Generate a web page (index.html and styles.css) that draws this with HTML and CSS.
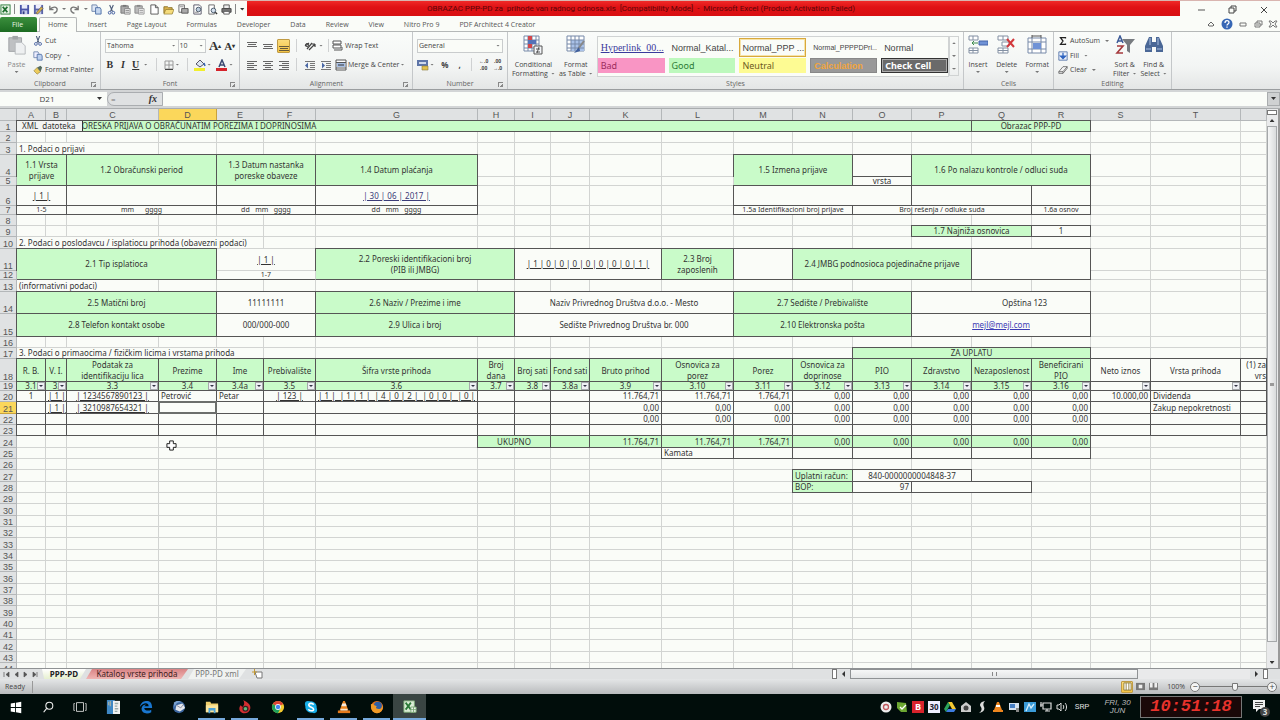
FILE: index.html
```html
<!DOCTYPE html>
<html lang="sr">
<head>
<meta charset="utf-8">
	<title>OBRAZAC PPP-PD - Microsoft Excel</title>
	<link rel="stylesheet" href="styles.css">
	<script src="sheet.js" defer></script>
</head>
<body>
	<header class="titleBar">
		<div class="quick">
			<button aria-label="Excel"><svg viewBox="0 0 12 12"><rect x="1" y="1" width="10" height="10" fill="#e9f3e6" stroke="#2f7d3c"/><path d="M3 3l5 6M8 3l-5 6" stroke="#1f6e2e" stroke-width="2"/></svg></button>
			<i class="bar"></i>
			<button aria-label="Save"><svg viewBox="0 0 12 12"><path d="M1 1h10v10H1z" fill="#4a55a8"/><path d="M3 1h6v4H3z" fill="#e8ecfa"/><path d="M3 7h6v4H3z" fill="#c3c9e8"/><path d="M4 8h2v3H4z" fill="#333c80"/></svg></button>
			<button aria-label="Save as"><svg viewBox="0 0 12 12"><path d="M1 1h10v10H1z" fill="#5964a8"/><path d="M3 1h6v4H3z" fill="#eef"/><path d="M3 7h6v4H3z" fill="#c3c9e8"/><path d="M3 10l6-7 2 2-6 6z" fill="#d8b04a" stroke="#444" stroke-width=".6"/></svg></button>
			<button aria-label="Undo"><svg viewBox="0 0 12 12"><path d="M2 2v4h4M2 6c3-4 8-3 8 0s-3 4-4 4" fill="none" stroke="#777" stroke-width="1.5"/></svg></button>
			<i class="arrow"></i>
			<button aria-label="Redo"><svg viewBox="0 0 12 12"><path d="M10 2v4H6M10 6c-3-4-8-3-8 0s3 4 4 4" fill="none" stroke="#777" stroke-width="1.5"/></svg></button>
			<i class="arrow"></i>
			<button aria-label="Copy"><svg viewBox="0 0 12 12"><path d="M1 1h5l1 2v5H1z" fill="#dfe8f6" stroke="#6b83ab"/><path d="M5 4h5l1 2v5H5z" fill="#c5d7f0" stroke="#4d6ea5"/></svg></button>
			<button aria-label="Cut"><svg viewBox="0 0 12 12"><path d="M4 1l3 7M8 1L5 8" stroke="#4a5a78" stroke-width="1.2"/><circle cx="4" cy="9.500" r="1.500" fill="none" stroke="#3a569b"/><circle cx="8" cy="9.500" r="1.500" fill="none" stroke="#3a569b"/></svg></button>
			<button aria-label="Paste"><svg viewBox="0 0 12 12"><path d="M1 2h8v8H1z" fill="#aaa" stroke="#777"/><path d="M3 1h4v2H3z" fill="#777"/><path d="M5 5h6v6H5z" fill="#eee" stroke="#888"/><path d="M6 7h4M6 9h4" stroke="#888"/></svg></button>
			<button aria-label="Paste values"><svg viewBox="0 0 12 12"><path d="M1 2h8v8H1z" fill="#bbb" stroke="#888"/><path d="M3 1h4v2H3z" fill="#888"/><path d="M5 5h6v6H5z" fill="#f2f2f2" stroke="#999"/><path d="M6 7h4M6 9h4" stroke="#999"/></svg></button>
			<button aria-label="New"><svg viewBox="0 0 12 12"><path d="M2 1h5l3 3v7H2z" fill="#fff" stroke="#555"/><path d="M7 1v3h3" fill="none" stroke="#555"/></svg></button>
			<button aria-label="Open"><svg viewBox="0 0 12 12"><path d="M1 3h4l1 1h4v6H1z" fill="#d9b24c" stroke="#8b7328"/><path d="M3 6h9l-2 5H1z" fill="#f5dc7c" stroke="#8b7328" stroke-width=".7"/></svg></button>
			<button aria-label="Print preview"><svg viewBox="0 0 12 12"><path d="M1 1h6v8H1z" fill="#fff" stroke="#666"/><path d="M4 5h7v5H4z" fill="#aaa" stroke="#555"/><path d="M2 3h4" stroke="#888"/></svg></button>
			<button aria-label="Page setup"><svg viewBox="0 0 12 12"><path d="M2 1h6l2 2v8H2z" fill="#fff" stroke="#556"/><circle cx="7" cy="6" r="2.500" fill="#bcd" stroke="#456"/><path d="M3 9h4" stroke="#888"/></svg></button>
			<button aria-label="Find"><svg viewBox="0 0 12 12"><path d="M2 1h6v10H2z" fill="#fff" stroke="#666"/><circle cx="7" cy="7" r="2.500" fill="#d5e0ee" stroke="#456"/><path d="M9 9l2 2" stroke="#333" stroke-width="1.500"/></svg></button>
			<button aria-label="Print"><svg viewBox="0 0 12 12"><path d="M3 1h6v4H3z" fill="#eee" stroke="#555"/><path d="M1 5h10v4H1z" fill="#777" stroke="#444"/><path d="M3 8h6v3H3z" fill="#fff" stroke="#555"/></svg></button>
			<i class="bar"></i>
			<i class="arrow dark"></i>
		</div>
		<div class="title">OBRAZAC PPP-PD za&nbsp; prihode van radnog odnosa.xls&nbsp; [Compatibility Mode]&nbsp; -&nbsp; Microsoft Excel (Product Activation Failed)</div>
		<div class="winBtns">
			<button aria-label="Minimize"><svg viewBox="0 0 10 10"><path d="M1 5h7" stroke="#555"/></svg></button>
			<button aria-label="Restore"><svg viewBox="0 0 10 10"><path d="M1 3h5v5H1zM3 3V1h5v5H6" fill="none" stroke="#444"/></svg></button>
			<button aria-label="Close"><svg viewBox="0 0 10 10"><path d="M2 2l6 6M8 2L2 8" stroke="#444"/></svg></button>
		</div>
	</header>
	<nav class="tabs">
		<button class="file">File</button>
		<button class="on">Home</button>
		<button>Insert</button>
		<button>Page Layout</button>
		<button>Formulas</button>
		<button>Developer</button>
		<button>Data</button>
		<button>Review</button>
		<button>View</button>
		<button>Nitro Pro 9</button>
		<button>PDF Architect 4 Creator</button>
		<div class="tabIcons">
			<svg viewBox="0 0 10 10"><path d="M2 6l3-3 3 3-1 1H3z" fill="none" stroke="#666"/></svg>
			<svg class="help" viewBox="0 0 12 12"><circle cx="6" cy="6" r="5.500" fill="#3767b5"/><path d="M4 5c0-3 4-3 4-.5C8 6 6 6 6 7.500M6 8.500v1.300" fill="none" stroke="#fff" stroke-width="1.300"/></svg>
			<svg viewBox="0 0 10 10"><path d="M2 4h6v3H2z" fill="none" stroke="#777"/></svg>
			<svg viewBox="0 0 10 10"><path d="M2 4h5v4H2zM4 4V2h5v4H7M3 6h3" fill="none" stroke="#777"/></svg>
			<svg viewBox="0 0 10 10"><path d="M1 2h2l2 2 2-2h2L7 5l2 3H7L5 6 3 8H1l2-3z" fill="none" stroke="#777"/></svg>
		</div>
	</nav>
	<section class="ribbon">
		<div class="group clip">
			<div class="tools">
				<button class="big faded"><svg viewBox="0 0 20 22"><path d="M1 3h14v15H1z" fill="#bfc1c3" stroke="#9da0a3"/><path d="M5 1h6v4H5z" fill="#a2a5a8"/><path d="M8 8h7l4 4v9H8z" fill="#eef0f1" stroke="#b3b6b9"/></svg>Paste<i class="arrow"></i></button>
				<div class="col">
					<button><svg viewBox="0 0 12 12"><path d="M4 0l3 8M8 0L5 8" stroke="#4a5a78" stroke-width="1.300"/><circle cx="3.500" cy="9.500" r="1.700" fill="none" stroke="#3a569b"/><circle cx="8.500" cy="9.500" r="1.700" fill="none" stroke="#3a569b"/></svg>Cut</button>
					<button><svg viewBox="0 0 12 12"><path d="M1 1h5l1 2v5H1z" fill="#eef" stroke="#6b83ab"/><path d="M5 4h5l1 2v5H5z" fill="#bcd0ee" stroke="#4d6ea5"/></svg>Copy<i class="arrow"></i></button>
					<button><svg viewBox="0 0 12 12"><path d="M1 7l4-4 4 5-4 3z" fill="#eccb5c" stroke="#8c7a3b" stroke-width=".7"/><path d="M5 3l4-2 2 2-2 5z" fill="#566c60"/></svg>Format Painter</button>
				</div>
			</div>
			<p>Clipboard<i class="launch"></i></p>
		</div>
		<div class="group font">
			<div class="tools rows">
				<div class="row">
					<label class="combo name"><input value="Tahoma" aria-label="Font"><i class="arrow"></i></label><label class="combo size"><input value="10" aria-label="Font size"><i class="arrow"></i></label>
					<button class="serif grow">A<sup>▴</sup></button>
					<button class="serif">A<sup>▾</sup></button>
				</div>
				<div class="row">
					<button class="serif fmt">B</button>
					<button class="serif fmt"><em>I</em></button>
					<button class="serif fmt"><u>U</u></button><i class="arrow"></i>
					<i class="line"></i>
					<button aria-label="Borders"><svg viewBox="0 0 12 12"><path d="M2 2h8v8H2zM6 2v8M2 6h8" fill="none" stroke="#999"/><path d="M2 10.500h8" stroke="#444"/></svg></button><i class="arrow"></i>
					<i class="line"></i>
					<button aria-label="Fill colour"><svg viewBox="0 0 12 12"><path d="M2 5l4-4 4 4-4 3z" fill="#dde6f2" stroke="#556"/><path d="M10 4l1 3" stroke="#3767b5" stroke-width="1.500"/><path d="M0 9h11v3H0z" fill="#f1ef2d"/></svg></button><i class="arrow"></i>
					<button aria-label="Font colour"><svg viewBox="0 0 12 12"><path d="M3 8l3-7 3 7M4 6h4" fill="none" stroke="#3b4a72" stroke-width="1.500"/><path d="M0 9h11v3H0z" fill="#d5222a"/></svg></button><i class="arrow"></i>
				</div>
			</div>
			<p>Font<i class="launch"></i></p>
		</div>
		<div class="group align">
			<div class="tools rows">
				<div class="row">
					<button aria-label="Top"><svg viewBox="0 0 12 12"><path d="M1 2.500h10M2 4.500h8M1 6.500h10" stroke="#666"/></svg></button>
					<button aria-label="Middle"><svg viewBox="0 0 12 12"><path d="M1 4.500h10M2 6.500h8M1 8.500h10" stroke="#666"/></svg></button>
					<button class="pressed" aria-label="Bottom"><svg viewBox="0 0 12 12"><path d="M1 6.500h10M2 8.500h8M1 10.500h10" stroke="#665a3c"/></svg></button>
					<i class="line"></i>
					<button aria-label="Orientation"><svg viewBox="0 0 12 12"><path d="M1 6l4-3M3 9l5-6M5 10l6-6M11 4H8M11 4v3" stroke="#444" stroke-width="1.200"/><circle cx="3" cy="5" r="1.500" fill="none" stroke="#444"/></svg></button><i class="arrow"></i>
					<i class="line off"></i>
					<button class="wide"><svg viewBox="0 0 12 12"><path d="M1 1h8v3H1zM1 5h8v3H1z" fill="#fff" stroke="#555"/><path d="M2 10h8V7" fill="none" stroke="#555"/></svg>Wrap Text</button>
				</div>
				<div class="row">
					<button aria-label="Left"><svg viewBox="0 0 12 12"><path d="M1 2.500h10M1 4.500h7M1 6.500h10M1 8.500h7M1 10.500h10" stroke="#666"/></svg></button>
					<button aria-label="Center"><svg viewBox="0 0 12 12"><path d="M1 2.500h10M3 4.500h6M1 6.500h10M3 8.500h6M1 10.500h10" stroke="#666"/></svg></button>
					<button aria-label="Right"><svg viewBox="0 0 12 12"><path d="M1 2.500h10M4 4.500h7M1 6.500h10M4 8.500h7M1 10.500h10" stroke="#666"/></svg></button>
					<i class="line"></i>
					<button aria-label="Outdent"><svg viewBox="0 0 12 12"><path d="M1 2.500h10M6 4.500h5M6 6.500h5M6 8.500h5M1 10.500h10" stroke="#777"/><path d="M1 6.500l3-3v6z" fill="#4a68a5"/></svg></button>
					<button aria-label="Indent"><svg viewBox="0 0 12 12"><path d="M1 2.500h10M6 4.500h5M6 6.500h5M6 8.500h5M1 10.500h10" stroke="#777"/><path d="M5 6.500l-3-3v6z" fill="#4a68a5"/></svg></button>
					<button class="wide"><svg viewBox="0 0 12 12"><path d="M1 1h10v10H1zM1 3.500h10M1 9h10" fill="#fff" stroke="#555"/><path d="M2 4h8v4H2z" fill="#a8c0e6"/><path d="M3 6h6" stroke="#333"/></svg>Merge &amp; Center<i class="arrow"></i></button>
				</div>
			</div>
			<p>Alignment<i class="launch"></i></p>
		</div>
		<div class="group number">
			<div class="tools rows">
				<div class="row"><label class="combo general"><input value="General" aria-label="Number format"><i class="arrow"></i></label></div>
				<div class="row">
					<button aria-label="Currency"><svg viewBox="0 0 12 12"><path d="M0 1h11v6H0z" fill="#5e75a8"/><path d="M2 3h7v2H2z" fill="#cdd8ec"/><path d="M5 7h6v4H5z" fill="#e2c04c" stroke="#8c7a3b" stroke-width=".6"/></svg></button><i class="arrow"></i>
					<button class="sign">%</button>
					<button class="sign">,</button>
					<i class="line"></i>
					<button class="dec"><span>←.0</span><span>.00</span></button>
					<button class="dec"><span>.00</span><span>→.0</span></button>
				</div>
			</div>
			<p>Number<i class="launch"></i></p>
		</div>
		<div class="group styles">
			<div class="tools">
				<button class="big"><svg viewBox="0 0 20 20"><path d="M1 1h15v15H1zM1 5h15M1 9h15M1 13h15M5 1v15M9 1v15M13 1v15" fill="#fff" stroke="#7689a8"/><path d="M5 1h4v4H5zM5 9h4v4H5z" fill="#d3464a"/><path d="M5 5h8v4H5z" fill="#5572b8"/><path d="M11 11h8v8h-8z" fill="#f3f5f8" stroke="#555"/><path d="M13 14h4M13 17h4M16 12l-2 6" stroke="#555"/></svg>Conditional<span>Formatting<i class="arrow"></i></span></button>
				<button class="big"><svg viewBox="0 0 20 20"><path d="M1 1h17v15H1z" fill="#fff" stroke="#7689a8"/><path d="M5 5h13v11H5z" fill="#a9c1e8"/><path d="M1 5h17M1 9h17M1 13h17M5 1v15M9 1v15M13 1v15" fill="none" stroke="#7689a8"/><path d="M18 6l-6 8" stroke="#888" stroke-width="2"/><path d="M13 12l-5 6 6-2z" fill="#3f5f9c"/></svg>Format<span>as Table<i class="arrow"></i></span></button>
				<div class="gallery">
					<button class="hyper">Hyperlink_00...</button>
					<button class="norm">Normal_Katal...</button>
					<button class="norm chosen">Normal_PPP ...</button>
					<button class="norm tiny">Normal_PPPPDPri...</button>
					<button class="norm">Normal</button>
					<button class="seg bad">Bad</button>
					<button class="seg good">Good</button>
					<button class="seg neutral">Neutral</button>
					<button class="seg calc">Calculation</button>
					<button class="seg check">Check Cell</button>
				</div>
				<div class="spin"><i class="arrow up"></i><i class="arrow"></i><i class="arrow more"></i></div>
			</div>
			<p>Styles</p>
		</div>
		<div class="group cells">
			<div class="tools">
				<button class="big"><svg viewBox="0 0 20 20"><path d="M1 1h9v4H1zM1 13h9v5H1zM5 1v4M5 13v5M1 15.500h9" fill="#fff" stroke="#8390a3"/><path d="M11 6h9v4h-9z" fill="#6f92d6" stroke="#4565a8"/><path d="M10 8H4M6 6L4 8l2 2" fill="none" stroke="#3c8a4b"/></svg>Insert<i class="arrow"></i></button>
				<button class="big"><svg viewBox="0 0 20 20"><path d="M1 1h10v4H1zM5 7h7v4H5zM1 13h10v5H1zM6 1v4M6 13v5M1 15.500h10" fill="#fff" stroke="#8390a3"/><path d="M10 4l7 8M17 4l-7 8" stroke="#d2383c" stroke-width="2"/></svg>Delete<i class="arrow"></i></button>
				<button class="big"><svg viewBox="0 0 20 20"><path d="M1 3h18v15H1zM1 7h18M1 14h18M5 3v15M14 3v15" fill="#fff" stroke="#7689a8"/><path d="M6 8h8v6H6z" fill="#6f92d6"/><path d="M5 1h9M5 0v3M14 0v3" stroke="#555"/></svg>Format<i class="arrow"></i></button>
			</div>
			<p>Cells</p>
		</div>
		<div class="group editing">
			<div class="tools">
				<div class="col">
					<button><svg viewBox="0 0 12 12"><path d="M9 3V2H3l3 4-3 4h6V9" fill="none" stroke="#222" stroke-width="1.500"/></svg>AutoSum<i class="arrow"></i></button>
					<button><svg viewBox="0 0 12 12"><path d="M1 1h10v10H1z" fill="#eaf0fa" stroke="#4d6ea5"/><path d="M6 2v6M3 6l3 3 3-3z" fill="#2d63c0" stroke="#2d63c0" stroke-width="1.500"/></svg>Fill<i class="arrow"></i></button>
					<button><svg viewBox="0 0 12 12"><path d="M1 8l5-6h5l-5 6zM1 8v2h5l5-6V2M6 8v2" fill="#f5f5f8" stroke="#555" stroke-width=".9"/></svg>Clear<i class="arrow"></i></button>
				</div>
				<button class="big"><svg viewBox="0 0 20 20"><path d="M2 8l3-7 3 7M3 6h4" fill="none" stroke="#3c5a97" stroke-width="1.500"/><path d="M2 11h6l-6 7h6" fill="none" stroke="#a53a3e" stroke-width="1.600"/><path d="M7 4h13l-5 6v8l-3-2v-6z" fill="#777b80"/></svg>Sort &amp;<span>Filter<i class="arrow"></i></span></button>
				<button class="big"><svg viewBox="0 0 20 20"><path d="M5 2h3v5h4V2h3l4 9v6h-7v-5H8v5H1v-6z" fill="#4a6796"/><path d="M6 3v7M14 3v7M2 14h5M13 14h5" stroke="#a9bfe0"/></svg>Find &amp;<span>Select<i class="arrow"></i></span></button>
			</div>
			<p>Editing</p>
		</div>
	</section>
	<section class="formulaBar">
		<label class="nameBox"><input value="D21" aria-label="Name box"><i class="arrow dark"></i></label>
		<div class="fx"><span>=</span><em>fx</em></div>
		<input class="formula" aria-label="Formula">
		<button class="expand" aria-label="Expand"><i class="arrow dark"></i></button>
	</section>
	<main class="sheetArea">
		<div class="sheetView"><table class="sheet" id="sheet"></table>
			<svg class="cursor" viewBox="0 0 12 12"><path d="M4 1h4v3h3v4H8v3H4V8H1V4h3z" fill="#fff" stroke="#111"/></svg>
		</div>
		<div class="vScroll"><i class="split"></i><i class="arrow up dark"></i><div class="thumb"><i></i></div><i class="arrow dark"></i></div>
	</main>
	<div class="sheetTabs">
		<svg class="navs" viewBox="0 0 42 11"><path d="M4 3v5M9 3L6 5.500 9 8zM18 3l-3 2.500L18 8zM24 3l3 2.500L24 8zM33 3l3 2.500L33 8zM37 3v5" fill="#555" stroke="#555" stroke-width=".7"/></svg>
		<button class="sel">PPP-PD</button>
		<button class="red">Katalog vrste prihoda</button>
		<button class="plain">PPP-PD xml</button>
		<button class="new" aria-label="New sheet"><svg viewBox="0 0 12 10"><path d="M4 3h7v6H6z" fill="#fff" stroke="#777"/><path d="M1 3h5M3.500 0v6" stroke="#c49a35"/></svg></button>
		<div class="hScroll"><i class="split"></i><i class="arrow left dark"></i><div class="track"><div class="thumb"><i></i></div></div><i class="arrow right dark"></i><i class="split"></i></div>
	</div>
	<footer class="status">
		<span class="ready">Ready</span>
		<div class="views">
			<button class="pressed" aria-label="Normal view"><svg viewBox="0 0 10 10"><path d="M1 1h8v8H1zM3.500 1v8M6.500 1v8" fill="#fff" stroke="#8c7a3b"/></svg></button>
			<button aria-label="Page layout"><svg viewBox="0 0 10 10"><path d="M0 1h10v8H0z" fill="#777"/><path d="M3 3h4v4H3z" fill="#eee"/></svg></button>
			<button aria-label="Page break"><svg viewBox="0 0 10 10"><path d="M0 1h10v8H0z" fill="#777"/><path d="M1 1h3v5H1zM6 1h3v5H6z" fill="#eee"/></svg></button>
		</div>
		<span class="pct">100%</span>
		<button class="round">−</button>
		<input class="zoom" type="range" min="0" max="100" value="53" aria-label="Zoom">
		<button class="round">+</button>
	</footer>
	<nav class="taskbar">
		<button aria-label="Start"><svg viewBox="0 0 16 16"><path d="M2 4l5-1v5H2zM8 3l6-1v6H8zM2 9h5v5l-5-1zM8 9h6v6l-6-1z" fill="#fff"/></svg></button>
		<button aria-label="Search"><svg viewBox="0 0 16 16"><circle cx="9.500" cy="6.500" r="4" fill="none" stroke="#eee" stroke-width="1.200"/><path d="M6.500 9.500L3 14" stroke="#eee" stroke-width="1.300"/></svg></button>
		<button aria-label="Task view"><svg viewBox="0 0 16 16"><path d="M4 3h8v10H4zM2 4H1v8h1M14 4h1v8h-1" fill="none" stroke="#ddd"/></svg></button>
		<button class="app" aria-label="Files"><svg viewBox="0 0 16 16"><path d="M1 0h9v16H1z" fill="#3e87c4"/><path d="M8 1h8v15H8z" fill="#f1f1f1"/><path d="M3 2v4M5 1v6M10 4h4M10 7h3M10 10h4M10 13h3" stroke="#9aa" stroke-width="1.500"/></svg></button>
		<button class="app" aria-label="Edge"><svg viewBox="0 0 16 16"><path d="M1 8C2 2 6 1 9 1c4 0 6 3 6 8H6c0 3 5 4 8 2v3c-5 3-12 1-11-5 1-3 3-4 5-4-1 1-2 2-2 2h5c0-5-7-4-10 1z" fill="#1976cf"/></svg></button>
		<button class="app" aria-label="Thunderbird"><svg viewBox="0 0 16 16"><circle cx="8" cy="8" r="7" fill="#3b659e"/><path d="M5 6l7-2 3 5-6 4-5-2z" fill="#e6e9ee"/><path d="M5 6l5 3 3-4" fill="none" stroke="#889"/><path d="M2 3c3-3 8-2 9 0-4-1-6 0-8 5z" fill="#7ba2d0"/></svg></button>
		<button class="app open" aria-label="Explorer"><svg viewBox="0 0 16 16"><path d="M1 2h5l1 2h8v10H1z" fill="#efce6c"/><path d="M1 6h14v8H1z" fill="#fae59d"/><path d="M4 9h8v6h-2v-3H6v3H4z" fill="#4da3d8"/></svg></button>
		<button class="app open" aria-label="Dragon"><svg viewBox="0 0 16 16"><path d="M6 0c5 3 9 5 8 10-1 4-5 6-8 5-4-1-6-5-3-9l2 2c2-2 3-4 1-8z" fill="#d42e31"/><circle cx="8.500" cy="10" r="3.500" fill="#3a2020"/><circle cx="8.500" cy="10" r="2" fill="#5bb87b"/></svg></button>
		<button class="app" aria-label="Chrome"><svg viewBox="0 0 16 16"><circle cx="8" cy="8" r="7" fill="#f2c92e"/><path d="M8 8L2 4.500A7 7 0 0 1 14 4.500z" fill="#dc4437"/><path d="M2 4.500A7 7 0 0 0 8 15l3-5.500-3-1.500z" fill="#1fa05a"/><circle cx="8" cy="8" r="3.300" fill="#fff"/><circle cx="8" cy="8" r="2.500" fill="#4385ee"/></svg></button>
		<button class="app open" aria-label="Skype"><svg viewBox="0 0 16 16"><circle cx="8" cy="8" r="6.500" fill="#18aee8"/><circle cx="4.500" cy="4.500" r="3.500" fill="#18aee8"/><circle cx="11.500" cy="11.500" r="3.500" fill="#18aee8"/><path d="M11 5.500C10 3 5 3.500 5.500 6S11 8 11 10.500 6 13 5 10.500" fill="none" stroke="#fff" stroke-width="1.800"/></svg></button>
		<button class="app open" aria-label="VLC"><svg viewBox="0 0 16 16"><path d="M7 1h2l4 11H3z" fill="#ee861e"/><path d="M6 4h4l1 3H5z" fill="#f4ece2"/><path d="M1 12h14v3H1z" fill="#e4791b"/><path d="M4 10h8v2H4z" fill="#f7e2ca"/></svg></button>
		<button class="app open" aria-label="Firefox"><svg viewBox="0 0 16 16"><circle cx="8" cy="8" r="7" fill="#e5711b"/><circle cx="9" cy="6.500" r="4.500" fill="#2e5fa6"/><path d="M1 5c2-1 3 0 4 1l3 1c-2 1-1 3 1 3 3 1 5-1 5-4 2 4-1 9-6 9S1 11 1 5z" fill="#f09a27"/></svg></button>
		<button class="app open active" aria-label="Excel"><svg viewBox="0 0 16 16"><path d="M1 1h12v13H1z" fill="#dbeed6" stroke="#78a875"/><path d="M3 3l6 8M9 3l-6 8" stroke="#2b7a38" stroke-width="2"/><path d="M9 8h6v6H9z" fill="#eef5ec" stroke="#78a875"/><path d="M9 11h6M12 8v6" stroke="#78a875"/></svg></button>
		<div class="tray">
			<svg viewBox="0 0 12 12"><circle cx="6" cy="6" r="5.500" fill="#eee"/><circle cx="6" cy="6" r="2.500" fill="none" stroke="#c2595e" stroke-width="1.300"/></svg>
			<svg viewBox="0 0 12 12"><path d="M1 1l9 1 1 9-6 0-4-4z" fill="#6da832"/><path d="M4 6l2 2 4-4" fill="none" stroke="#fff" stroke-width="1.300"/></svg>
			<b class="sq b">B</b>
			<b class="sq d">30</b>
			<svg viewBox="0 0 12 12"><path d="M4 1h4l4 7H8z" fill="#f3c832"/><path d="M4 1L0 8l2 3 4-7z" fill="#2ba35a"/><path d="M2 11l2-3h8l-2 3z" fill="#3d7ce0"/></svg>
			<svg viewBox="0 0 12 12"><path d="M1 5l5-4 5 4v6H1z" fill="#ccc"/><circle cx="6" cy="7" r="2.500" fill="#444"/></svg>
			<svg viewBox="0 0 12 12"><path d="M9 0c-5 1-6 4-4 6 1 2 1 4-2 6 5-1 6-4 5-6S7 2 9 0z" fill="#ddd"/></svg>
			<svg viewBox="0 0 12 12"><path d="M5 1h2l3 8H2z" fill="#ee861e"/><path d="M4 4h4v2H4z" fill="#fff"/><path d="M1 9h10v2H1z" fill="#ee861e"/></svg>
			<svg viewBox="0 0 12 12"><path d="M1 2h10v7H1z" fill="#d5e1ee"/><path d="M2 3h5v4H2z" fill="#477fc4"/><path d="M8 7h3v4H8z" fill="#888"/></svg>
			<svg viewBox="0 0 12 12"><path d="M0 1h12v10H0z" fill="#3b9bd8"/><path d="M2 10l3-7 2 4 3-4" stroke="#d9eefa" stroke-width="1.300" fill="none"/></svg>
			<svg viewBox="0 0 12 12"><path d="M3 2h8v6H3zM1 1v5M0 4h3M5 10h5M7 8v2" fill="none" stroke="#ddd" stroke-width="1.200"/></svg>
			<svg viewBox="0 0 12 12"><path d="M1 4h2l2-2v8L3 8H1zM7 4c1 1 1 3 0 4M9 2c2 2 2 6 0 8" fill="none" stroke="#ddd"/></svg>
		</div>
		<span class="lang">SRP</span>
		<span class="date">FRI, 30<br>JUN</span>
		<span class="clock">10:51:18</span>
		<button class="note" aria-label="Notifications"><svg viewBox="0 0 18 18"><path d="M1 2h12v9H7l-3 3v-3H1z" fill="#f0f0f0"/><path d="M3 4.500h8M3 6.500h8M3 8.500h5" stroke="#444"/></svg><b>3</b></button>
	</nav>
</body>
</html>
```

FILE: styles.css
```css
*{
	box-sizing: border-box;
}
body{
	margin: 0px;
	height: 100vh;
	display: flex;
	flex-direction: column;
	overflow: hidden;
	background-color: #fafcf8;
	font-family: "Open Sans", "Noto Sans", sans-serif;
	font-size: 7px;
	line-height: 8px;
	color: #444;
}
button, input{
	font: inherit;
	color: inherit;
	background: none;
	border: 0;
	padding: 0;
	margin: 0;
	min-width: 0;
}
button{
	display: flex;
	align-items: center;
	white-space: nowrap;
}
p{
	margin: 0;
}
svg{
	display: block;
	width: 12px;
	height: 12px;
	flex: none;
}
/* small drop-down arrows */
.arrow{
	display: inline-block;
	flex: none;
	width: 4px;
	height: 2px;
	margin-left: 3px;
	background-color: #777;
	clip-path: polygon(0 0, 100% 0, 50% 100%);
}
.arrow.dark{
	width: 5px;
	height: 3px;
	background-color: #333;
}
.arrow.up{
	clip-path: polygon(0 100%, 100% 100%, 50% 0);
}
.arrow.left{
	width: 3px;
	height: 6px;
	clip-path: polygon(100% 0, 100% 100%, 0 50%);
}
.arrow.right{
	width: 3px;
	height: 6px;
	clip-path: polygon(0 0, 0 100%, 100% 50%);
}

/* title bar */
.titleBar{
	display: flex;
	height: 17px;
	flex: none;
	border-top: 1px solid #d9b5b0;
}
.quick{
	width: 247px;
	flex: none;
	display: flex;
	align-items: center;
	justify-content: space-between;
	padding-right: 2px;
}
.quick svg{
	width: 11px;
	height: 11px;
}
.quick .arrow{
	margin: 0;
}
.bar{
	width: 1px;
	height: 10px;
	background-color: #888;
}
.title{
	flex: 1;
	height: 15px;
	padding-left: 180px;
	line-height: 15px;
	font-family: Roboto, "Noto Sans", sans-serif;
	font-size: 8px;
	color: #5b0508;
	background: linear-gradient(#f02a28, #e01215 40%, #d80f12);
	white-space: nowrap;
	overflow: hidden;
}
.winBtns{
	width: 100px;
	display: flex;
	align-items: center;
	justify-content: space-between;
	padding: 2px 11px 0 17px;
}
.winBtns svg{
	width: 10px;
	height: 10px;
}

/* ribbon tabs */
.tabs{
	display: flex;
	height: 15px;
	flex: none;
	gap: 2px;
	border-bottom: 1px solid #b5b8b8;
}
.tabs button{
	height: 15px;
	padding: 0 9px;
	color: #555;
}
.tabs .file{
	width: 37px;
	padding: 0 12px;
	color: #e8f5e4;
	background: linear-gradient(#3b8f3d, #1c6b22);
	border-radius: 2px 2px 0 0;
}
.tabs .on{
	background-color: #fafcf8;
	border: 1px solid #b5b8b8;
	border-bottom: 0;
	border-radius: 2px 2px 0 0;
	padding: 0 8px;
}
.tabIcons{
	margin-left: auto;
	display: flex;
	align-items: center;
	gap: 5px;
	padding-right: 2px;
}
.tabIcons svg{
	width: 10px;
	height: 10px;
}
.tabIcons .help{
	width: 12px;
	height: 12px;
}

/* ribbon */
.ribbon{
	display: flex;
	height: 58px;
	flex: none;
	background: linear-gradient(#fafcfa, #f3f5f4 60%, #e4e6e6);
	border-bottom: 1px solid #9a9d9f;
}
.group{
	flex: none;
	display: flex;
	flex-direction: column;
	border-right: 1px solid #c4c7c9;
	padding: 3px 4px 0;
}
.group p{
	position: relative;
	text-align: center;
	color: #666;
	line-height: 10px;
}
.launch{
	position: absolute;
	right: 0;
	top: 3px;
	width: 5px;
	height: 5px;
	border-left: 1px solid #888;
	border-top: 1px solid #888;
	background: linear-gradient(135deg, transparent 55%, #888 55%);
}
.tools{
	flex: 1;
	display: flex;
	gap: 4px;
}
.rows{
	flex-direction: column;
	gap: 4px;
	padding-top: 3px;
}
.row{
	display: flex;
	align-items: center;
	height: 15px;
	gap: 3px;
}
.row .arrow{
	margin: 0 2px 0 0;
}
.col{
	display: flex;
	flex-direction: column;
	justify-content: space-between;
	padding: 0 0 3px;
}
.col button{
	gap: 2px;
	height: 12px;
}
.col svg{
	width: 10px;
	height: 10px;
}
.big{
	flex-direction: column;
	line-height: 9px;
}
.big svg{
	width: 20px;
	height: 20px;
	margin-bottom: 5px;
}
.big > .arrow{
	margin: 2px 0 0;
}
.big span{
	display: flex;
	align-items: center;
}
.faded{
	color: #888;
	width: 25px;
}
.clip{
	width: 101px;
}
.font{
	width: 139px;
}
.align{
	width: 173px;
	padding-left: 5px;
}
.number{
	width: 95px;
}
.styles{
	width: 456px;
}
.cells{
	width: 90px;
}
.editing{
	width: 118px;
}
.cells .tools{
	justify-content: space-between;
}
.combo{
	display: flex;
	align-items: center;
	height: 14px;
	border: 1px solid #c9cccd;
	background-color: #fafcf8;
}
.combo input{
	flex: 1;
	width: 20px;
	padding-left: 1px;
}
.name{
	width: 75px;
}
.size{
	width: 29px;
	margin-left: -4px;
}
.general{
	width: 89px;
}
.serif{
	font-family: "Liberation Serif", serif;
	font-weight: bold;
	font-size: 11px;
	color: #333;
}
.grow{
	font-size: 13px;
}
.serif sup{
	font-size: 6px;
}
.fmt{
	width: 12px;
	justify-content: center;
	font-size: 10px;
}
.line{
	width: 1px;
	height: 13px;
	margin: 0 3px;
	background-color: #cfd1d2;
}
.line.off{
	margin: 0;
}
.align button:not(.wide){
	width: 13px;
	height: 14px;
	justify-content: center;
}
.pressed{
	background: linear-gradient(#fbdc7c, #f4c445);
	border: 1px solid #c09b44;
	border-radius: 1px;
}
.wide{
	gap: 1px;
}
.sign{
	width: 14px;
	font-size: 8px;
	font-weight: bold;
	justify-content: center;
}
.dec{
	flex-direction: column;
	width: 13px;
	font-size: 5px;
	line-height: 7px;
	font-weight: bold;
}
.gallery{
	flex: 1;
	display: grid;
	grid-template-columns: repeat(5, 1fr);
	grid-template-rows: 19px 15px;
	gap: 1px 4px;
	height: 41px;
	margin: 1px 0 0 0;
	padding: 1px 0;
	border: 1px solid #d0d3d3;
	background-color: #fafcf8;
}
.gallery button{
	padding: 0 3px;
	overflow: hidden;
}
.hyper{
	font-family: "Liberation Serif", serif;
	font-size: 10px;
	color: #3a3a9c;
	text-decoration: underline;
}
.norm{
	font-family: "Liberation Sans", sans-serif;
	font-size: 9px;
}
.gallery .chosen{
	padding: 0 2px;
	border: 1px solid #d8a93c;
	box-shadow: inset 0 0 0 1px #f6e3a8;
}
.gallery .tiny{
	font-size: 7px;
}
.seg{
	font-family: "Noto Sans", sans-serif;
	font-size: 9px;
}
.bad{
	background-color: #f995c4;
	color: #9c2b5c;
}
.good{
	background-color: #bdf9bd;
	color: #2b7a35;
}
.neutral{
	background-color: #fdfb93;
	color: #6e5a1e;
}
.calc{
	background-color: #999;
	color: #f2a53c;
	font-weight: bold;
	font-family: "Liberation Sans", sans-serif;
	border: 1px solid #888;
}
.check{
	background-color: #6a6a6a;
	color: #fff;
	font-weight: bold;
	border: 1px solid #333;
	outline: 1px solid #aaa;
	outline-offset: -2px;
}
.spin{
	width: 10px;
	height: 40px;
	margin: 1px 0 0 -4px;
	display: flex;
	flex-direction: column;
	align-items: center;
	justify-content: space-around;
	border: 1px solid #d0d3d3;
}
.spin .arrow{
	margin: 0;
}
.more{
	border-top: 1px solid #777;
}

/* formula bar */
.formulaBar{
	display: flex;
	align-items: center;
	height: 19px;
	flex: none;
	padding: 2px 0 3px;
	background-color: #d3d5d6;
	border-bottom: 1px solid #a9acae;
	font-size: 8px;
}
.formulaBar > *{
	height: 14px;
}
.nameBox{
	display: flex;
	align-items: center;
	width: 107px;
	padding-right: 5px;
	background-color: #fafcf8;
}
.nameBox input{
	flex: 1;
	text-align: center;
}
.fx{
	display: flex;
	align-items: center;
	justify-content: space-between;
	width: 56px;
	padding: 0 5px 0 3px;
	border: 1px solid #aaadb0;
	border-radius: 7px 0 0 7px;
	background-color: #dfe1e2;
	color: #777;
}
.fx em{
	font-family: "Liberation Serif", serif;
	font-weight: bold;
	font-size: 10px;
	color: #333;
}
.formula{
	flex: 1;
	background-color: #fafcf8;
}
.expand{
	width: 13px;
	justify-content: center;
	background-color: #cfd1d2;
	border: 1px solid #a9acae;
}
.expand .arrow{
	margin: 0;
}

/* worksheet */
.sheetArea{
	flex: 1;
	min-height: 0;
	display: flex;
}
.sheetView{
	position: relative;
	flex: 1;
	min-width: 0;
	overflow: hidden;
}
.sheet{
	width: 100%;
	table-layout: fixed;
	border-collapse: separate;
	border-spacing: 0;
	font-family: "Noto Sans", sans-serif;
	font-size: 8px;
	line-height: 8px;
	color: #333;
}
.sheet td, .sheet th{
	padding: 0 2px;
	border-right: 1px solid #d2d4d2;
	border-bottom: 1px solid #d2d4d2;
	white-space: nowrap;
	vertical-align: middle;
}
.sheet th{
	padding: 0;
	font-family: "Liberation Sans", sans-serif;
	font-weight: normal;
	font-size: 9px;
	color: #555;
	background-color: #e0e2e3;
	border-color: #b4b7b9;
	text-align: center;
}
.sheet tbody th{
	vertical-align: bottom;
}
.sheet .hot{
	background-color: #fbd75b;
	border-color: #c9a23c;
}
.sheet .box{
	border-color: #555;
	box-shadow: -1px 0 #555, 0 -1px #555, -1px -1px #555;
}
.sheet .under{
	border-bottom-color: #555;
}
.sheet .green{
	background-color: #c9fbc9;
}
.sheet .c{
	text-align: center;
}
.sheet .r{
	text-align: right;
}
.sheet .two{
	line-height: 11px;
}
.sheet .small{
	font-size: 7px;
}
.sheet .cut{
	text-align: right;
	padding: 0;
}
.sheet .form{
	position: relative;
	padding-left: 60px;
}
.sheet .opt{
	padding-left: 90px;
}
.sheet u{
	white-space: pre;
}
.sheet a{
	color: #3b3bb5;
}
.sheet .blue{
	color: #3c3c78;
}
.xml{
	position: absolute;
	left: 0;
	top: 0;
	width: 66px;
	height: 10px;
	padding-left: 5px;
	background-color: #f2f4f2;
	border-right: 1px solid #333;
}
.sheet .filter, .sheet .pick{
	position: relative;
}
.filter button{
	position: absolute;
	right: 0;
	top: 0;
	width: 8px;
	height: 8px;
	justify-content: center;
	background-color: #eef0f4;
	border: 1px solid #a5a8ab;
}
.filter .arrow{
	margin: 0;
	background-color: #334;
}
.pick::after{
	content: "";
	position: absolute;
	inset: -1px -1px -1px -1px;
	border: 2px solid #6b6e6b;
}
.cursor{
	position: absolute;
	left: 166px;
	top: 331px;
	width: 11px;
	height: 11px;
}
.split{
	flex: none;
	width: 10px;
	height: 5px;
	border: 1px solid #777;
	background-color: #fff;
}
.vScroll{
	width: 13px;
	display: flex;
	flex-direction: column;
	align-items: center;
	gap: 4px;
	padding: 1px 1px 4px 0;
	background-color: #e9eaeb;
	border-right: 2px solid #999;
}
.vScroll .arrow, .hScroll .arrow{
	margin: 0;
}
.vScroll .thumb{
	flex: 1;
	width: 10px;
	margin-bottom: 15px;
	display: flex;
	align-items: center;
	justify-content: center;
	border: 1px solid #a5a8aa;
	background: linear-gradient(90deg, #f6f7f7, #d9dbdc);
}
.vScroll .thumb i{
	width: 4px;
	height: 3px;
	background-color: #999;
}

/* sheet tabs */
.sheetTabs{
	display: flex;
	height: 11px;
	flex: none;
	background-color: #dfe1e2;
	border-top: 1px solid #8f9294;
	font-family: "Noto Sans", sans-serif;
	font-size: 8px;
}
.navs{
	width: 42px;
	height: 11px;
}
.sheetTabs button{
	height: 10px;
	justify-content: center;
}
.sheetTabs .sel{
	width: 44px;
	font-weight: bold;
	color: #222;
	background: linear-gradient(#fff, #e6f0cf);
	clip-path: polygon(0 0, 100% 0, 86% 100%, 5% 100%);
}
.sheetTabs .red{
	width: 102px;
	color: #402020;
	background: linear-gradient(#d98486, #f0b5b3);
	clip-path: polygon(6px 0, 100% 0, 95px 100%, 0 100%);
}
.sheetTabs .plain{
	width: 58px;
	color: #777;
	background-color: #f0f2f1;
	clip-path: polygon(6px 0, 100% 0, 51px 100%, 0 100%);
}
.sheetTabs .new{
	width: 22px;
}
.hScroll{
	width: 35%;
	margin-left: auto;
	padding-right: 12px;
	display: flex;
	align-items: center;
	gap: 5px;
}
.hScroll .split{
	width: 5px;
	height: 10px;
}
.hScroll .track{
	flex: 1;
	height: 10px;
	background-color: #e9eaeb;
}
.hScroll .thumb{
	width: 72%;
	height: 10px;
	display: flex;
	align-items: center;
	justify-content: center;
	border: 1px solid #8f9294;
	background: linear-gradient(#f6f7f7, #e3e5e6);
}
.hScroll .thumb i{
	width: 5px;
	height: 4px;
	border: 1px solid #888;
	border-width: 0 1px;
}

/* status bar */
.status{
	display: flex;
	align-items: center;
	height: 15px;
	flex: none;
	padding-right: 3px;
	background: linear-gradient(#e4e6e7, #b9bbbd);
}
.ready{
	width: 33px;
	line-height: 12px;
	padding-left: 5px;
	border-right: 1px solid #999;
}
.views{
	display: flex;
	gap: 1px;
	margin-left: auto;
	padding-right: 8px;
}
.views button{
	width: 12px;
	height: 12px;
	justify-content: center;
}
.views svg{
	width: 9px;
	height: 9px;
}
.pct{
	padding-right: 5px;
}
.round{
	width: 10px;
	height: 10px;
	justify-content: center;
	border: 1px solid #777;
	border-radius: 5px;
	background-color: #f4f5f5;
	font-size: 9px;
}
.zoom{
	appearance: none;
	width: 67px;
	height: 10px;
	background: linear-gradient(#777, #777) center / 100% 1px no-repeat;
}
.zoom::-webkit-slider-thumb{
	appearance: none;
	width: 6px;
	height: 8px;
	background-color: #f4f5f5;
	border: 1px solid #777;
	border-radius: 0 0 3px 3px;
}

/* taskbar */
.taskbar{
	display: flex;
	align-items: center;
	height: 26px;
	flex: none;
	background-color: #010d0b;
	color: #ddd;
}
.taskbar > button{
	width: 32px;
	height: 26px;
	justify-content: center;
}
.taskbar svg{
	width: 14px;
	height: 14px;
}
.taskbar .app{
	width: 33px;
}
.taskbar .open{
	background: linear-gradient(#76a9dc, #76a9dc) bottom / 27px 2px no-repeat;
}
.taskbar .active{
	background-color: #3a4543;
	background-size: 33px 2px;
}
.tray{
	display: flex;
	gap: 4px;
	margin-left: auto;
}
.tray svg, .sq{
	width: 12px;
	height: 12px;
}
.sq{
	line-height: 12px;
	text-align: center;
	font-size: 9px;
}
.sq.b{
	background-color: #d8232c;
	color: #fff;
}
.sq.d{
	background-color: #eef;
	color: #223;
	font-size: 8px;
}
.lang{
	width: 28px;
	text-align: center;
	font-size: 8px;
	font-family: Roboto, sans-serif;
}
.date{
	width: 43px;
	margin-right: 1px;
	text-align: center;
	font-family: "Liberation Sans", sans-serif;
	font-style: italic;
	font-size: 8px;
	color: #bbb;
}
.clock{
	width: 102px;
	height: 22px;
	border: 1px solid #777;
	background-color: #1a0808;
	text-align: center;
	font-family: "Liberation Mono", monospace;
	font-weight: bold;
	font-style: italic;
	font-size: 17px;
	line-height: 20px;
	color: #e8322c;
}
.taskbar .note{
	position: relative;
	width: 38px;
}
.note svg{
	width: 18px;
	height: 18px;
}
.note b{
	position: absolute;
	right: 10px;
	bottom: 3px;
	width: 10px;
	height: 10px;
	border-radius: 5px;
	background-color: #444;
	line-height: 10px;
	text-align: center;
	font-size: 8px;
}
```

FILE: sheet.js
```js
var cols = "ABCDEFGHIJKLMNOPQRSTU";
var widths = [29,21,92,58,47,52,162,37,36,39,72,72,59,60,59,60,60,59,60,90];
var heights = [11,11,12,22,9,20,9,11,11,12,22,9,12,22,23,11,11,23,9,11,12,11,11,12,11,11,12,11,11,12,11,11,12,11,11,12,11,11,12,11,11,12,11,11];

// range, text, classes
var cells = [
	["A1:P1", '<button class="xml">XML&nbsp; datoteka</button>PORESKA PRIJAVA O OBRAČUNATIM POREZIMA I DOPRINOSIMA', "box green form"],
	["Q1:R1", "Obrazac PPP-PD", "box green c"],
	["A3:C3", "1. Podaci o prijavi", ""],
	["A4:B5", "1.1 Vrsta<br>prijave", "box green c two"],
	["C4:D5", "1.2 Obračunski period", "box green c"],
	["E4:F5", "1.3 Datum nastanka<br>poreske obaveze", "box green c two"],
	["G4:G5", "1.4 Datum plaćanja", "box green c"],
	["M4:N5", "1.5 Izmena prijave", "box green c"],
	["O4:O4", "", "box"],
	["O5:O5", "vrsta", "box c"],
	["P4:R5", "1.6 Po nalazu kontrole / odluci suda", "box green c"],
	["A6:B6", "<u>| 1 |</u>", "box c"],
	["C6:D6", "", "box"],
	["E6:F6", "", "box"],
	["G6:G6", '<u class="blue">| 30 | 06 | 2017 |</u>', "box c"],
	["M6:O6", "", "box"],
	["P6:Q6", "", "box"],
	["R6:R6", "", "box"],
	["A7:B7", "1-5", "box c small"],
	["C7:D7", "mm &nbsp; &nbsp; &nbsp;gggg", "box c small"],
	["E7:F7", "dd &nbsp; mm &nbsp; gggg", "box c small"],
	["G7:G7", "dd &nbsp; mm &nbsp; gggg", "box c small"],
	["M7:N7", "1.5a Identifikacioni broj prijave", "box c small"],
	["O7:Q7", "Broj rešenja / odluke suda", "box c small"],
	["R7:R7", "1.6a osnov", "box c small"],
	["P9:Q9", "1.7 Najniža osnovica", "box green c"],
	["R9:R9", "1", "box c"],
	["A10:E10", "2. Podaci o poslodavcu / isplatiocu prihoda (obavezni podaci)", ""],
	["A11:D12", "2.1 Tip isplatioca", "box green c"],
	["E11:F11", "<u>| 1 |</u>", "c"],
	["E12:F12", "1-7", "c small under"],
	["G11:H12", "2.2 Poreski identifikacioni broj<br>(PIB ili JMBG)", "box green c two"],
	["I11:K12", "<u>| 1 | 0 | 0 | 0 | 0 | 0 | 0 | 0 | 1 |</u>", "box c"],
	["L11:L12", "2.3 Broj<br>zaposlenih", "box green c two"],
	["M11:M12", "", "box"],
	["N11:P12", "2.4 JMBG podnosioca pojedinačne prijave", "box green c"],
	["Q11:R12", "", "box"],
	["A13:C13", "(informativni podaci)", ""],
	["A14:D14", "2.5 Matični broj", "box green c"],
	["E14:F14", "11111111", "box c"],
	["G14:H14", "2.6 Naziv / Prezime i ime", "box green c"],
	["I14:L14", "Naziv Privrednog Društva d.o.o. - Mesto", "box c"],
	["M14:O14", "2.7 Sedište / Prebivalište", "box green c"],
	["P14:R14", "Opština 123", "box opt"],
	["A15:D15", "2.8 Telefon kontakt osobe", "box green c"],
	["E15:F15", "000/000-000", "box c"],
	["G15:H15", "2.9 Ulica i broj", "box green c"],
	["I15:L15", "Sedište Privrednog Društva br. 000", "box c"],
	["M15:O15", "2.10 Elektronska pošta", "box green c"],
	["P15:R15", '<a href="mailto:mejl@mejl.com">mejl@mejl.com</a>', "box c"],
	["A17:E17", "3. Podaci o primaocima / fizičkim licima i vrstama prihoda", ""],
	["O17:R17", "ZA UPLATU", "box green c"],
	["H24:I24", "UKUPNO", "box green c"],
	["J24:J24", "", "box green"],
	["L25:L25", "Kamata", "box"],
	["N27:N27", "Uplatni račun:", "box green"],
	["O27:P27", "840-0000000004848-37", "box c"],
	["N28:N28", "BOP:", "box green"],
	["O28:O28", "97", "box r"],
	["P28:Q28", "", "box"]
];

var heads = ["R. B.", "V. I.", "Podatak za<br>identifikaciju lica", "Prezime", "Ime", "Prebivalište", "Šifra vrste prihoda",
	"Broj<br>dana", "Broj sati", "Fond sati", "Bruto prihod", "Osnovica za<br>porez", "Porez", "Osnovica za<br>doprinose",
	"PIO", "Zdravstvo", "Nezaposlenost", "Beneficirani<br>PIO", "Neto iznos", "Vrsta prihoda", "(1) za<br>vrs"];
var nums = ["3.1", "3.", "3.3", "3.4", "3.4a", "3.5", "3.6", "3.7", "3.8", "3.8a", "3.9", "3.10", "3.11", "3.12", "3.13", "3.14", "3.15", "3.16", "", "", ""];
var people = [
	["1", "<u>| 1 |</u>", "<u>| 1234567890123 |</u>", "Petrović", "Petar", "<u>| 123 |</u>", "<u>| 1 |  | 1 | 1 |  | 4 | 0 | 2 |  | 0 | 0 |  | 0 |</u>"],
	["", "<u>| 1 |</u>", "<u>| 3210987654321 |</u>", "", "", "", ""],
	[],
	[]
];
var sums = ["11.764,71", "11.764,71", "1.764,71", "0,00", "0,00", "0,00", "0,00", "0,00"];

for (var i = 0; i < 21; i++) {
	var c = cols[i];
	var green = i < 18 ? " green" : "";
	cells.push([c + "18:" + c + "18", heads[i], "box two" + green + (i == 20 ? " cut" : " c")]);
	cells.push([c + "19:" + c + "19", nums[i] + (i < 20 ? '<button aria-label="Filter"><i class="arrow"></i></button>' : ""), "box c filter" + green]);
	for (var p = 0; p < 4; p++) {
		var text = people[p][i] || "";
		var align = i == 3 || i == 4 || i == 19 ? "" : " c";
		if (i >= 10 && i < 18 && p < 3) {
			text = p == 0 ? sums[i - 10] : "0,00";
			align = " r";
		}
		if (i == 18 && p == 0) {
			text = "10.000,00";
			align = " r";
		}
		if (i == 19) {
			text = ["Dividenda", "Zakup nepokretnosti", "", ""][p];
		}
		if (i == 3 && p == 1) {
			align = " pick";
		}
		cells.push([c + (20 + p) + ":" + c + (20 + p), text, "box" + align]);
	}
	if (i >= 10 && i < 18) {
		cells.push([c + "24:" + c + "24", sums[i - 10], "box green r"]);
	}
	if (i >= 12 && i < 18) {
		cells.push([c + "25:" + c + "25", "", "box"]);
	}
}

function place(ref) {
	return { col: cols.indexOf(ref[0]), row: Number(ref.slice(1)) };
}

var starts = {};
var covered = {};
cells.forEach(function (cell) {
	var ends = cell[0].split(":");
	var a = place(ends[0]);
	var b = place(ends[1]);
	starts[a.col + "," + a.row] = { w: b.col - a.col + 1, h: b.row - a.row + 1, text: cell[1], cls: cell[2] };
	for (var y = a.row; y <= b.row; y++) {
		for (var x = a.col; x <= b.col; x++) {
			covered[x + "," + y] = true;
		}
	}
});

var html = '<colgroup><col style="width:17px">';
widths.forEach(function (w) {
	html += '<col style="width:' + w + 'px">';
});
html += '<col></colgroup><thead><tr style="height:12px"><th></th>';
for (var k = 0; k < 21; k++) {
	html += '<th' + (cols[k] == "D" ? ' class="hot"' : "") + ">" + (k < 20 ? cols[k] : "") + "</th>";
}
html += "</tr></thead><tbody>";
heights.forEach(function (h, n) {
	var row = n + 1;
	html += '<tr style="height:' + h + 'px"><th' + (row == 21 ? ' class="hot"' : "") + ">" + row + "</th>";
	for (var x = 0; x < 21; x++) {
		var s = starts[x + "," + row];
		if (s) {
			html += '<td class="' + s.cls + '" colspan="' + s.w + '" rowspan="' + s.h + '">' + s.text + "</td>";
		} else if (!covered[x + "," + row]) {
			html += "<td></td>";
		}
	}
	html += "</tr>";
});
document.getElementById("sheet").innerHTML = html + "</tbody>";
```
